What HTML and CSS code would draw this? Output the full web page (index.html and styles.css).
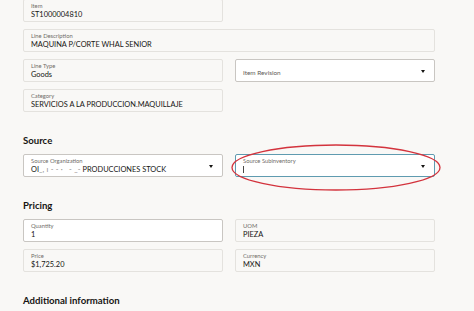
FILE: index.html
```html
<!DOCTYPE html>
<html>
<head>
<meta charset="utf-8">
<link rel="stylesheet" href="styles.css">
</head>
<body>
<div class="page">
  <div class="grid first">
    <div class="field ro"><div class="lbl">Item</div><div class="val">ST1000004810</div></div>
    <div></div>
    <div class="field ro span2"><div class="lbl">Line Description</div><div class="val">MAQUINA P/CORTE WHAL SENIOR</div></div>
    <div class="field ro"><div class="lbl">Line Type</div><div class="val">Goods</div></div>
    <div class="field sel placeholder"><div class="ph">Item Revision</div><span class="arrow"></span></div>
    <div class="field ro"><div class="lbl">Category</div><div class="val">SERVICIOS A LA PRODUCCION.MAQUILLAJE</div></div>
  </div>

  <h2 class="head">Source</h2>
  <div class="grid">
    <div class="field sel"><div class="lbl">Source Organization</div><div class="val">OI<span class="blur">_, ı ‐ ‐ ·&nbsp;&nbsp;&nbsp;‐ _‐</span> PRODUCCIONES STOCK</div><span class="arrow"></span></div>
    <div class="field sel focus"><div class="lbl">Source Subinventory</div><div class="val"><span class="caret"></span></div><span class="arrow"></span></div>
  </div>

  <h2 class="head">Pricing</h2>
  <div class="grid">
    <div class="field edit"><div class="lbl">Quantity</div><div class="val">1</div></div>
    <div class="field ro"><div class="lbl">UOM</div><div class="val">PIEZA</div></div>
    <div class="field ro"><div class="lbl">Price</div><div class="val">$1,725.20</div></div>
    <div class="field ro"><div class="lbl">Currency</div><div class="val">MXN</div></div>
  </div>

  <h2 class="head">Additional information</h2>

  <svg class="mark" width="212" height="48" viewBox="0 0 212 48">
    <ellipse cx="106" cy="23.5" rx="104" ry="22.5" fill="none" stroke="#d3333d" stroke-width="1.3"/>
  </svg>
</div>
</body>
</html>
```

FILE: styles.css
```css
html, body {
  margin: 0;
  padding: 0;
  background: #f9f8f6;
}
body {
  width: 474px;
  height: 311px;
  overflow: hidden;
  font-family: Lato, "Open Sans", sans-serif;
  color: #161513;
}
.page {
  position: relative;
  padding: 0 39px 0 23px;
  margin-top: -1px;
}
.grid {
  display: grid;
  grid-template-columns: 200px 200px;
  column-gap: 12px;
  row-gap: 7px;
}
.span2 { grid-column: 1 / 3; }
.field {
  position: relative;
  box-sizing: border-box;
  height: 23px;
  border: 1px solid #e4e2de;
  border-radius: 2px;
  padding: 2px 7px 0 7px;
  background: #f9f8f6;
}
.field.edit, .field.sel {
  background: #ffffff;
  border-color: #c9c6c2;
}
.field.focus {
  border-color: #5f9bb0;
}
.lbl {
  font-size: 5.8px;
  line-height: 8px;
  color: #6f6c68;
}
.val {
  font-size: 7.4px;
  line-height: 10px;
  white-space: nowrap;
}
.ph {
  font-size: 6.4px;
  line-height: 21px;
  color: #5e5b57;
}
.arrow {
  position: absolute;
  right: 9px;
  top: 10px;
  width: 0;
  height: 0;
  border-left: 2.5px solid transparent;
  border-right: 2.5px solid transparent;
  border-top: 3px solid #161513;
}
.blur {
  color: #8d8a86;
  letter-spacing: 0.2px;
}
.caret {
  display: inline-block;
  width: 1px;
  height: 7px;
  background: #4a4845;
  vertical-align: -1px;
}
.head {
  margin: 23px 0 7px 0;
  font-size: 9.6px;
  line-height: 12px;
  font-weight: 700;
}
.mark {
  position: absolute;
  left: 230px;
  top: 145px;
}
```
